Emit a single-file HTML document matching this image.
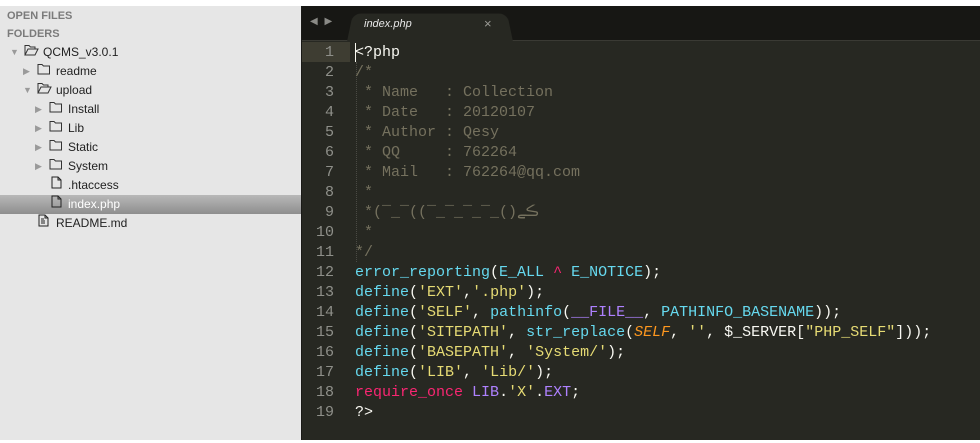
<!DOCTYPE html>
<html><head><meta charset="utf-8"><style>
*{margin:0;padding:0;box-sizing:border-box}
body{width:980px;height:440px;overflow:hidden;background:#fff;position:relative;font-family:"Liberation Sans","DejaVu Sans",sans-serif}
#side{position:absolute;left:0;top:6px;width:301px;height:434px;background:#e6e6e6}
.h{position:absolute;left:7px;font-size:11px;font-weight:bold;color:#7b7b7b}
.r{position:absolute;left:0;width:301px;height:19px;font-size:12px;color:#222;line-height:19px}
.r span{position:absolute}
.sel{background:linear-gradient(#b8b8b8,#8e8e8e);color:#fff}
.ar{font-size:9px;color:#9a9a9a}
#ed{position:absolute;left:301px;top:6px;width:679px;height:434px;background:#272822;border-left:1px solid #1a1a17}
#tabs{position:absolute;left:0;top:0;width:679px;height:35px;background:#171714;border-bottom:1px solid #3a3a34}
#tab{position:absolute;left:48px;top:7px;width:160px;height:29px;background:#272822;border-radius:8px 8px 0 0;transform:perspective(40px) rotateX(6deg);}
#tabt{position:absolute;left:62px;top:12px;font-size:11px;font-style:italic;color:#e8e8e8}
#tabx{position:absolute;left:182px;top:10px;font-size:13px;color:#9a9a95}
#nav{position:absolute;left:8px;top:10px;font-size:10px;color:#8a8a86;letter-spacing:2px}
#code{position:absolute;left:0;top:37px;font-family:"Liberation Mono","DejaVu Sans Mono",monospace;font-size:15px;line-height:20px;white-space:pre}
.ln{position:absolute;left:0;width:32px;text-align:right;color:#8f908a}
.cl{position:absolute;left:53px;color:#f8f8f2}
.c{color:#75715e}.f{color:#66d9ef}.s{color:#e6db74}.k{color:#f92672}.p{color:#ae81ff}.o{color:#fd971f;font-style:italic}
#g1{position:absolute;left:0;top:36px;width:48px;height:20px;background:#3e3d32}
#guide{position:absolute;left:54px;top:56px;width:1px;height:200px;border-left:1px dotted #4a4a44}
#cur{position:absolute;left:53px;top:37px;width:1px;height:19px;background:#f8f8f0}
</style></head><body>
<div id="side">
<div class="h" style="top:4px">OPEN FILES</div>
<div class="h" style="top:22px">FOLDERS</div>
<div class="r" style="top:37px"><span class="ar" style="left:10px">▼</span><span style="left:24px"><svg width="15" height="12" viewBox="0 0 15 12"><path d="M1 11V1.5h4l1.5 1.5H11V5M1 11l3-6h10l-3 6z" fill="none" stroke="#333"/></svg></span><span style="left:43px">QCMS_v3.0.1</span></div>
<div class="r" style="top:56px"><span class="ar" style="left:23px">▶</span><span style="left:37px"><svg width="14" height="12" viewBox="0 0 14 12"><path d="M1 11V1.5h4l1.5 1.5h6V11z" fill="none" stroke="#333"/></svg></span><span style="left:56px">readme</span></div>
<div class="r" style="top:75px"><span class="ar" style="left:23px">▼</span><span style="left:37px"><svg width="15" height="12" viewBox="0 0 15 12"><path d="M1 11V1.5h4l1.5 1.5H11V5M1 11l3-6h10l-3 6z" fill="none" stroke="#333"/></svg></span><span style="left:56px">upload</span></div>
<div class="r" style="top:94px"><span class="ar" style="left:35px">▶</span><span style="left:49px"><svg width="14" height="12" viewBox="0 0 14 12"><path d="M1 11V1.5h4l1.5 1.5h6V11z" fill="none" stroke="#333"/></svg></span><span style="left:68px">Install</span></div>
<div class="r" style="top:113px"><span class="ar" style="left:35px">▶</span><span style="left:49px"><svg width="14" height="12" viewBox="0 0 14 12"><path d="M1 11V1.5h4l1.5 1.5h6V11z" fill="none" stroke="#333"/></svg></span><span style="left:68px">Lib</span></div>
<div class="r" style="top:132px"><span class="ar" style="left:35px">▶</span><span style="left:49px"><svg width="14" height="12" viewBox="0 0 14 12"><path d="M1 11V1.5h4l1.5 1.5h6V11z" fill="none" stroke="#333"/></svg></span><span style="left:68px">Static</span></div>
<div class="r" style="top:151px"><span class="ar" style="left:35px">▶</span><span style="left:49px"><svg width="14" height="12" viewBox="0 0 14 12"><path d="M1 11V1.5h4l1.5 1.5h6V11z" fill="none" stroke="#333"/></svg></span><span style="left:68px">System</span></div>
<div class="r" style="top:170px"><span style="left:51px"><svg width="11" height="13" viewBox="0 0 11 13"><path d="M1 12V1h6l3 3v8z M7 1v3h3" fill="none" stroke="#222"/></svg></span><span style="left:68px">.htaccess</span></div>
<div class="r sel" style="top:189px"><span style="left:51px"><svg width="11" height="13" viewBox="0 0 11 13"><path d="M1 12V1h6l3 3v8z M7 1v3h3" fill="none" stroke="#222"/></svg></span><span style="left:68px">index.php</span></div>
<div class="r" style="top:208px"><span style="left:38px"><svg width="11" height="13" viewBox="0 0 11 13"><path d="M1 12V1h6l3 3v8z M7 1v3h3 M3 5h3M3 7h4M3 9h4" fill="none" stroke="#222"/></svg></span><span style="left:56px">README.md</span></div>
</div>
<div id="ed">
<div id="tabs"><div id="nav">◀ ▶</div><div id="tab"></div><div id="tabt">index.php</div><div id="tabx">×</div></div>
<div id="g1"></div><div id="guide"></div>
<div id="code">
<div class="ln" style="top:0">1</div><div class="cl" style="top:0">&lt;?php</div>
<div class="ln" style="top:20px">2</div><div class="cl c" style="top:20px">/*</div>
<div class="ln" style="top:40px">3</div><div class="cl c" style="top:40px"> * Name   : Collection</div>
<div class="ln" style="top:60px">4</div><div class="cl c" style="top:60px"> * Date   : 20120107</div>
<div class="ln" style="top:80px">5</div><div class="cl c" style="top:80px"> * Author : Qesy</div>
<div class="ln" style="top:100px">6</div><div class="cl c" style="top:100px"> * QQ     : 762264</div>
<div class="ln" style="top:120px">7</div><div class="cl c" style="top:120px"> * Mail   : 762264@qq.com</div>
<div class="ln" style="top:140px">8</div><div class="cl c" style="top:140px"> *</div>
<div class="ln" style="top:160px">9</div><div class="cl c" style="top:160px"> *(‾_‾((‾_‾_‾_‾_()ڪے</div>
<div class="ln" style="top:180px">10</div><div class="cl c" style="top:180px"> *</div>
<div class="ln" style="top:200px">11</div><div class="cl c" style="top:200px">*/</div>
<div class="ln" style="top:220px">12</div><div class="cl" style="top:220px"><span class="f">error_reporting</span>(<span class="f">E_ALL</span> <span class="k">^</span> <span class="f">E_NOTICE</span>);</div>
<div class="ln" style="top:240px">13</div><div class="cl" style="top:240px"><span class="f">define</span>(<span class="s">'EXT'</span>,<span class="s">'.php'</span>);</div>
<div class="ln" style="top:260px">14</div><div class="cl" style="top:260px"><span class="f">define</span>(<span class="s">'SELF'</span>, <span class="f">pathinfo</span>(<span class="p">__FILE__</span>, <span class="f">PATHINFO_BASENAME</span>));</div>
<div class="ln" style="top:280px">15</div><div class="cl" style="top:280px"><span class="f">define</span>(<span class="s">'SITEPATH'</span>, <span class="f">str_replace</span>(<span class="o">SELF</span>, <span class="s">''</span>, $_SERVER[<span class="s">"PHP_SELF"</span>]));</div>
<div class="ln" style="top:300px">16</div><div class="cl" style="top:300px"><span class="f">define</span>(<span class="s">'BASEPATH'</span>, <span class="s">'System/'</span>);</div>
<div class="ln" style="top:320px">17</div><div class="cl" style="top:320px"><span class="f">define</span>(<span class="s">'LIB'</span>, <span class="s">'Lib/'</span>);</div>
<div class="ln" style="top:340px">18</div><div class="cl" style="top:340px"><span class="k">require_once</span> <span class="p">LIB</span>.<span class="s">'X'</span>.<span class="p">EXT</span>;</div>
<div class="ln" style="top:360px">19</div><div class="cl" style="top:360px">?&gt;</div>
</div>
<div id="cur"></div>
</div>
</body></html>
